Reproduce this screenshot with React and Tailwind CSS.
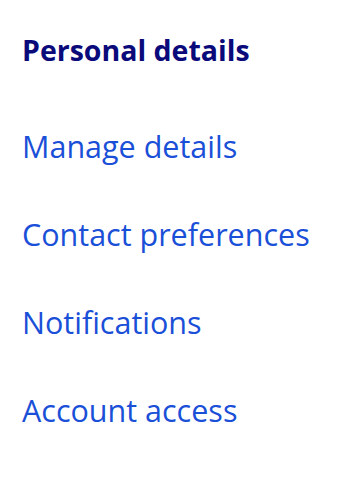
const links = ["Manage details", "Contact preferences", "Notifications", "Account access"]

const App = () => {
	return (
		<div
			className="min-h-[480px] w-[354px] bg-white px-[22px] pt-[31px]"
			style={{ fontFamily: '"Open Sans", "Noto Sans", sans-serif' }}
		>
			<h2 className="text-[28.5px] font-bold leading-[38px] text-[#0a0a7a]">
				Personal details
			</h2>

			<ul className="mt-[58px] flex flex-col gap-[50px]">
				{links.map((label) => (
					<li key={label}>
						<a href="#" className="text-[30.5px] leading-[38px] text-[#1a4fd8]">
							{label}
						</a>
					</li>
				))}
			</ul>
		</div>
	)
}

export default App
